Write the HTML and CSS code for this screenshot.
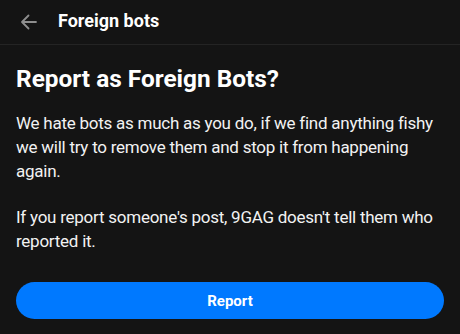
FILE: index.html
```html
<!DOCTYPE html>
<html>
<head>
<meta charset="utf-8">
<link rel="stylesheet" href="styles.css">
</head>
<body>
<div class="screen">
  <header class="topbar">
    <span class="back">
      <svg width="18" height="18" viewBox="0 0 18 18" fill="none" stroke="#8e8e8e" stroke-width="1.8" stroke-linecap="round" stroke-linejoin="round">
        <path d="M16 9H2.5M8.5 2.5L2 9l6.5 6.5"/>
      </svg>
    </span>
    <span class="title">Foreign bots</span>
  </header>
  <main class="content">
    <h1 class="heading">Report as Foreign Bots?</h1>
    <p class="text">We hate bots as much as you do, if we find anything fishy we will try to remove them and stop it from happening again.</p>
    <p class="text second">If you report someone's post, 9GAG doesn't tell them who reported it.</p>
    <button class="report">Report</button>
  </main>
</div>
</body>
</html>
```

FILE: styles.css
```css
html, body {
  margin: 0;
  padding: 0;
  background: #141414;
}
body {
  font-family: Roboto, "Noto Sans", sans-serif;
  color: #ffffff;
}
.screen {
  width: 460px;
  height: 334px;
  display: flex;
  flex-direction: column;
}
.topbar {
  height: 44px;
  border-bottom: 1px solid #242424;
  display: flex;
  align-items: center;
  box-sizing: content-box;
}
.back {
  width: 18px;
  height: 18px;
  margin-left: 20px;
  display: flex;
}
.title {
  margin-left: 20px;
  font-size: 18px;
  font-weight: 700;
  line-height: 24px;
  margin-top: -3px;
}
.content {
  padding: 0 16px;
  display: flex;
  flex-direction: column;
}
.heading {
  margin: 20px 0 0 0;
  font-size: 24.4px;
  line-height: 28px;
  font-weight: 700;
}
.text {
  margin: 18px 0 0 0;
  font-size: 17px;
  letter-spacing: -0.25px;
  line-height: 24px;
  font-weight: 400;
  color: #f2f2f2;
}
.text.second {
  margin-top: 22px;
}
.report {
  margin-top: 29px;
  height: 37px;
  border: none;
  border-radius: 19px;
  background: #0079ff;
  color: #ffffff;
  font-family: Roboto, "Noto Sans", sans-serif;
  font-size: 15px;
  font-weight: 700;
  padding: 0;
  cursor: pointer;
}
```
